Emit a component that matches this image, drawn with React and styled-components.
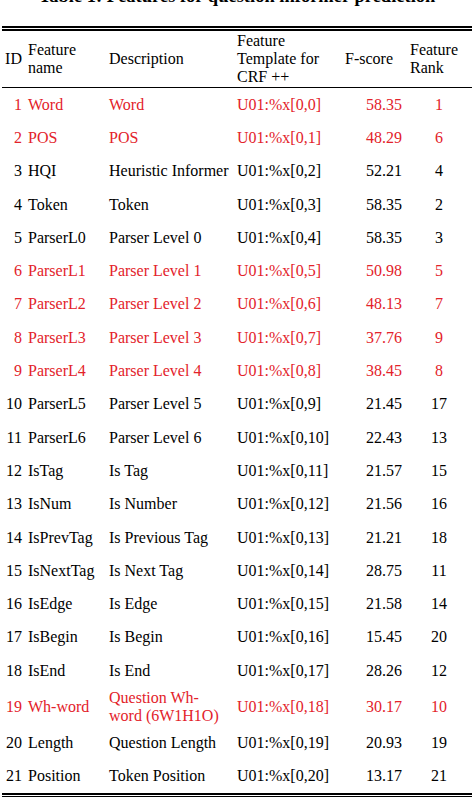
import React from "react";
import styled, { createGlobalStyle } from "styled-components";

const GlobalStyle = createGlobalStyle`
  html, body {
    margin: 0;
    padding: 0;
    background: #fff;
  }
  body {
    font-family: "Liberation Serif", "Times New Roman", serif;
    color: #000;
    overflow: hidden;
  }
`;

const Page = styled.div`
  width: 474px;
  height: 797px;
  overflow: hidden;
`;

const Caption = styled.div`
  margin-top: -15px;
  text-align: center;
  font-size: 18.5px;
  line-height: 22px;
  font-weight: bold;
  white-space: nowrap;
`;

const Table = styled.table`
  margin: 19px 0 0 2px;
  width: 470px;
  table-layout: fixed;
  border-collapse: separate;
  border-spacing: 0;
  border-top: 5px double #000;
  border-bottom: 5px double #000;
  font-size: 16px;
  line-height: 18px;
`;

const Th = styled.th`
  height: 56px;
  padding: 0 ${(p) => (p.$align === "right" ? 3 : 0)}px 0 ${(p) => p.$pad || 0}px;
  font-weight: normal;
  text-align: ${(p) => p.$align || "left"};
  vertical-align: middle;
  border-bottom: 1.5px solid #000;
`;

const Row = styled.tr`
  color: ${(p) => (p.$hot ? "#e3222a" : "#000")};
`;

const Td = styled.td`
  height: ${(p) => (p.$tall ? 39 : 33.3)}px;
  padding: 0 ${(p) => p.$right || 0}px 0 ${(p) => p.$left || 0}px;
  text-align: ${(p) => p.$align || "left"};
  vertical-align: middle;
  white-space: nowrap;
`;

const rows = [
  [1, "Word", "Word", "0", "58.35", 1, true],
  [2, "POS", "POS", "1", "48.29", 6, true],
  [3, "HQI", "Heuristic Informer", "2", "52.21", 4],
  [4, "Token", "Token", "3", "58.35", 2],
  [5, "ParserL0", "Parser Level 0", "4", "58.35", 3],
  [6, "ParserL1", "Parser Level 1", "5", "50.98", 5, true],
  [7, "ParserL2", "Parser Level 2", "6", "48.13", 7, true],
  [8, "ParserL3", "Parser Level 3", "7", "37.76", 9, true],
  [9, "ParserL4", "Parser Level 4", "8", "38.45", 8, true],
  [10, "ParserL5", "Parser Level 5", "9", "21.45", 17],
  [11, "ParserL6", "Parser Level 6", "10", "22.43", 13],
  [12, "IsTag", "Is Tag", "11", "21.57", 15],
  [13, "IsNum", "Is Number", "12", "21.56", 16],
  [14, "IsPrevTag", "Is Previous Tag", "13", "21.21", 18],
  [15, "IsNextTag", "Is Next Tag", "14", "28.75", 11],
  [16, "IsEdge", "Is Edge", "15", "21.58", 14],
  [17, "IsBegin", "Is Begin", "16", "15.45", 20],
  [18, "IsEnd", "Is End", "17", "28.26", 12],
  [19, "Wh-word", ["Question Wh-", "word (6W1H1O)"], "18", "30.17", 10, true],
  [20, "Length", "Question Length", "19", "20.93", 19],
  [21, "Position", "Token Position", "20", "13.17", 21],
];

export default function App() {
  return (
    <Page>
      <GlobalStyle />
      <Caption>Table 1: Features for question informer prediction</Caption>
      <Table>
        <colgroup>
          <col style={{ width: 23 }} />
          <col style={{ width: 80 }} />
          <col style={{ width: 128 }} />
          <col style={{ width: 107 }} />
          <col style={{ width: 66 }} />
          <col style={{ width: 66 }} />
        </colgroup>
        <thead>
          <tr>
            <Th $align="right">ID</Th>
            <Th $pad={3}>
              Feature
              <br />
              name
            </Th>
            <Th $pad={4}>Description</Th>
            <Th $pad={4}>
              Feature
              <br />
              Template for
              <br />
              CRF ++
            </Th>
            <Th $pad={5}>F-score</Th>
            <Th $pad={4}>
              Feature
              <br />
              Rank
            </Th>
          </tr>
        </thead>
        <tbody>
          {rows.map(([id, name, desc, idx, score, rank, hot]) => {
            const tall = Array.isArray(desc);
            return (
              <Row key={id} $hot={hot}>
                <Td $tall={tall} $align="right" $right={3}>
                  {id}
                </Td>
                <Td $tall={tall} $left={3}>
                  {name}
                </Td>
                <Td $tall={tall} $left={4}>
                  {tall ? (
                    <>
                      {desc[0]}
                      <br />
                      {desc[1]}
                    </>
                  ) : (
                    desc
                  )}
                </Td>
                <Td $tall={tall} $left={4}>
                  U01:%x[0,{idx}]
                </Td>
                <Td $tall={tall} $align="right" $right={4}>
                  {score}
                </Td>
                <Td $tall={tall} $align="center">
                  {rank}
                </Td>
              </Row>
            );
          })}
        </tbody>
      </Table>
    </Page>
  );
}
